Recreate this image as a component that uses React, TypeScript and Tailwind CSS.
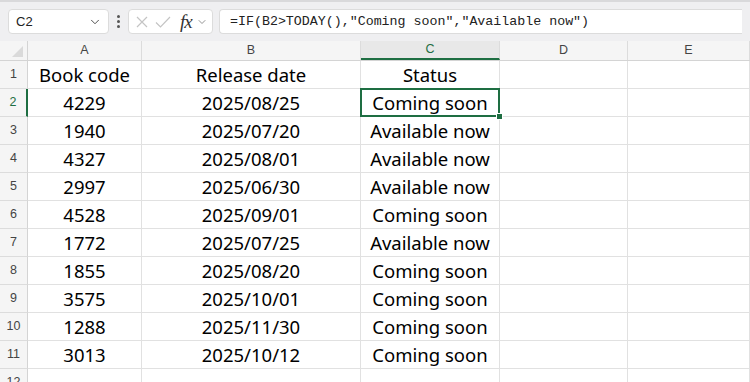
import { ChevronDown } from 'lucide-react';

const rows = [
  ['Book code', 'Release date', 'Status'],
  ['4229', '2025/08/25', 'Coming soon'],
  ['1940', '2025/07/20', 'Available now'],
  ['4327', '2025/08/01', 'Available now'],
  ['2997', '2025/06/30', 'Available now'],
  ['4528', '2025/09/01', 'Coming soon'],
  ['1772', '2025/07/25', 'Available now'],
  ['1855', '2025/08/20', 'Coming soon'],
  ['3575', '2025/10/01', 'Coming soon'],
  ['1288', '2025/11/30', 'Coming soon'],
  ['3013', '2025/10/12', 'Coming soon'],
  ['', '', ''],
];

const cols = [
  { name: 'A', w: 'w-[114px]' },
  { name: 'B', w: 'w-[219px]' },
  { name: 'C', w: 'w-[139px]' },
  { name: 'D', w: 'w-[128px]' },
  { name: 'E', w: 'flex-1' },
];

export default function App() {
  return (
    <div className="w-[750px] h-[382px] overflow-hidden bg-white font-['Liberation_Sans',sans-serif]">
      {/* formula bar */}
      <div className="h-[41px] bg-[#efeff1] border-t-2 border-[#d9d9db] flex items-center gap-[6px] px-2">
        <div className="w-[101px] h-[25px] bg-white rounded border border-[#dcdcdc] flex items-center justify-between pl-[7px] pr-[6px]">
          <span className="text-[13px] text-[#222]">C2</span>
          <ChevronDown size={14} strokeWidth={1.6} className="text-[#444]" />
        </div>
        <div className="flex flex-col gap-[2px] px-[2px]">
          <span className="w-[3px] h-[3px] bg-[#555] rounded-full" />
          <span className="w-[3px] h-[3px] bg-[#555] rounded-full" />
          <span className="w-[3px] h-[3px] bg-[#555] rounded-full" />
        </div>
        <div className="w-[85px] h-[25px] bg-white rounded border border-[#dcdcdc] flex items-center pl-[5px] gap-[4px]">
          <svg width="16" height="16" viewBox="0 0 16 16" fill="none" stroke="#c4c4c4" strokeWidth="1.2">
            <path d="M3 3l10 10M13 3L3 13" />
          </svg>
          <svg width="18" height="16" viewBox="0 0 18 16" fill="none" stroke="#c4c4c4" strokeWidth="1.2">
            <path d="M2 8.5l4.5 4.5L16 3" />
          </svg>
          <span className="ml-[4px] text-[19px] leading-none italic text-[#333] font-['Liberation_Serif',serif] tracking-[-1px]">fx</span>
          <ChevronDown size={12} strokeWidth={1.6} className="text-[#777]" />
        </div>
        <div className="flex-1 h-[25px] bg-white rounded-l border border-r-0 border-[#dcdcdc] flex items-center pl-[10px]">
          <span className="text-[13.3px] text-[#222] font-['Liberation_Mono',monospace] whitespace-pre">
            =IF(B2&gt;TODAY(),"Coming soon","Available now")
          </span>
        </div>
      </div>

      {/* column headers */}
      <div className="flex h-[20px] bg-[#f5f5f5] border-b border-[#d4d4d4]">
        <div className="w-[28px] relative border-r border-[#d4d4d4]">
          <div className="absolute right-[4px] bottom-[3px] w-0 h-0 border-l-[11px] border-l-transparent border-b-[11px] border-b-[#dadada]" />
        </div>
        {cols.map((c) => (
          <div
            key={c.name}
            className={`${c.w} flex items-center justify-center text-[12.5px] border-r border-[#dcdcdc] ${
              c.name === 'C' ? 'text-[#1e6e42] bg-[#e8e8e8] border-b-2 border-b-[#1e6e42]' : 'text-[#444]'
            }`}
          >
            {c.name}
          </div>
        ))}
      </div>

      {/* rows */}
      {rows.map((r, i) => (
        <div key={i} className="flex h-[28px]">
          <div
            className={`w-[28px] flex items-center justify-center text-[12.5px] bg-[#f5f5f5] border-b border-[#dcdcdc] ${
              i === 1 ? 'text-[#1e6e42] border-r-2 border-r-[#1e6e42] bg-[#e8e8e8]' : 'text-[#444] border-r border-r-[#d4d4d4]'
            }`}
          >
            {i + 1}
          </div>
          {cols.map((c, j) => {
            const sel = i === 1 && j === 2;
            return (
              <div
                key={c.name}
                className={`${c.w} relative flex items-center justify-center pt-[1px] text-[18.5px] text-black font-['Noto_Sans',sans-serif] border-r border-b border-[#e1e1e1] ${sel ? 'z-10' : ''}`}
              >
                {r[j] ?? ''}
                {sel && (
                  <>
                    <div className="absolute -left-[1px] -top-[1px] right-[-1px] bottom-[-1px] border-2 border-[#1e6e42]" />
                    <div className="absolute right-[-4px] bottom-[-4px] w-[7px] h-[7px] bg-[#1e6e42] border border-white" />
                  </>
                )}
              </div>
            );
          })}
        </div>
      ))}
    </div>
  );
}
